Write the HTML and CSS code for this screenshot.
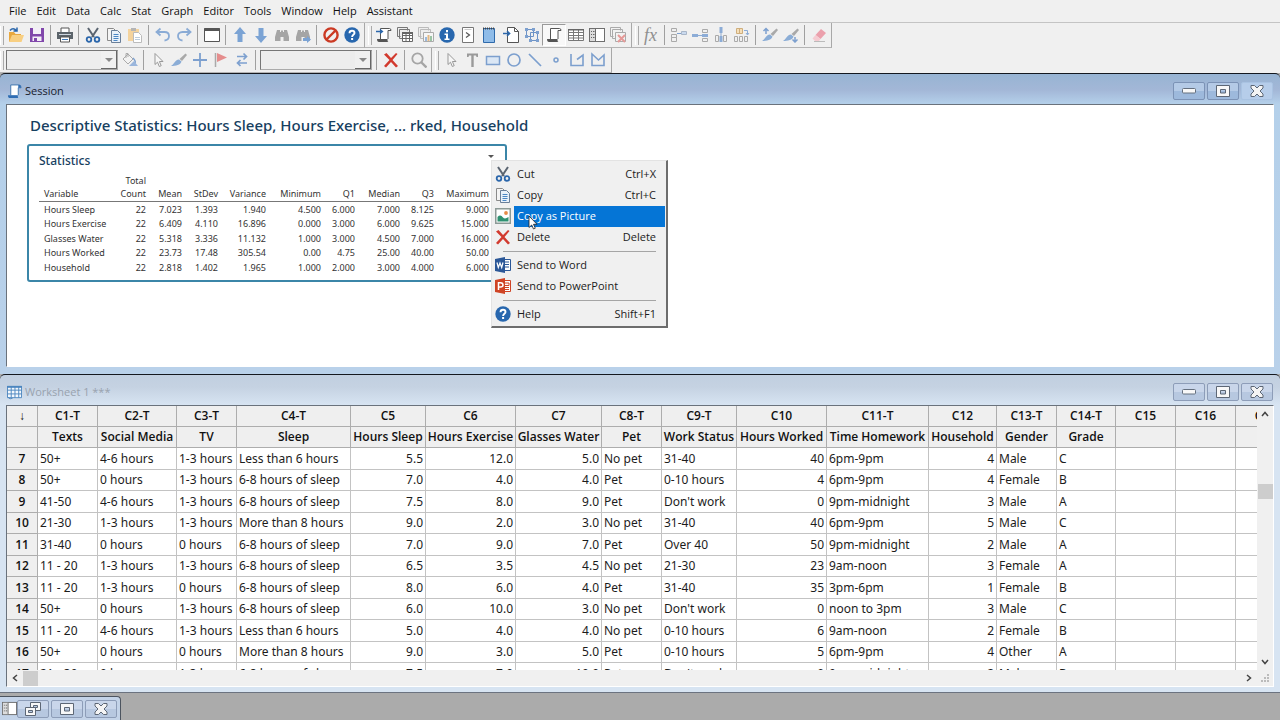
FILE: index.html
```
<!DOCTYPE html>
<html lang="en">
<head>
    <meta charset="UTF-8">
    <meta name="viewport" content="width=device-width, initial-scale=1.0">
    <title>Minitab - Session</title>
    <link rel="stylesheet" href="styles.css">
</head>
<body>
    <!-- Icons used more than once -->
    <svg class="sprite" aria-hidden="true">
        <symbol id="i-cut" viewBox="0 0 16 16">
            <path d="M3 1l6 9M13 1L7 10" stroke="#5a6470" stroke-width="2" fill="none"/>
            <circle cx="4" cy="12.5" r="2.3" fill="none" stroke="#2a66ab" stroke-width="1.8"/>
            <circle cx="12" cy="12.5" r="2.3" fill="none" stroke="#2a66ab" stroke-width="1.8"/>
        </symbol>
        <symbol id="i-copy" viewBox="0 0 16 16">
            <path d="M5 13.5H1.5v-12h6l2 2" fill="#f4f4f4" stroke="#8a8a8a"/>
            <path d="M5.500 3.500h6l3 3v9h-9z" fill="#e9f1fa" stroke="#6a7f99"/>
            <path d="M7.500 7.500h5M7.500 9.500h5M7.500 11.500h5M7.500 13.500h4" stroke="#4a86c4"/>
        </symbol>
        <symbol id="i-x" viewBox="0 0 16 16">
            <path d="M1 2.500L3.500 1 8 6l5-5 1.500 1L9.500 8l5.500 6-2 1.500-5-5.500-5 5.500L1 14l5.500-6z" fill="#d23a2e"/>
        </symbol>
        <symbol id="i-help" viewBox="0 0 16 16">
            <circle cx="8" cy="8" r="7.700" fill="#2867ae"/>
            <path d="M5.500 6.200C5.500 4.500 6.500 3.700 8 3.700s2.500.9 2.500 2.200c0 1.800-2.400 1.900-2.400 4" fill="none" stroke="#fff" stroke-width="1.900"/>
            <rect x="7.100" y="11" width="2" height="2" fill="#fff"/>
        </symbol>
        <symbol id="i-arrow" viewBox="0 0 16 16">
            <path d="M5 1.500v11l2.500-2.300L9.300 14.500l1.900-.8-1.800-4.200H13z" fill="#f6f6f6" stroke="#999"/>
        </symbol>
        <symbol id="i-binoculars" viewBox="0 0 16 16">
            <path d="M3 3h3v2h1V3.500h2V5h1V3h3l2 7v4H9.500v-4h-3v4H1v-4z" fill="#a5a5a5"/>
        </symbol>
        <symbol id="i-brush" viewBox="0 0 16 16">
            <path d="M14.500 1.500L16 3l-5 6-2.500-2z" fill="#a9a9a9"/>
            <path d="M8 7.500l2.500 2C9.500 13 5 14 0 14c3-1.500 3.500-6 8-6.500z" fill="#8badd6"/>
        </symbol>
        <symbol id="i-scroll" viewBox="0 0 16 16">
            <path d="M4.500 12V1.500h9q1.500 0 1.500 2h-3V12" fill="#fff" stroke="#555"/>
            <path d="M1 12h10.500v1q0 2 1 2H3q-2 0-2-3z" fill="#555"/>
        </symbol>
        <symbol id="i-panel" viewBox="0 0 16 14">
            <rect x=".5" y=".5" width="15" height="13" fill="#fff" stroke="#6e6e6e"/>
            <rect x="1" y="1" width="5.500" height="12" fill="#ddd"/>
            <path d="M6.500 1v12" stroke="#6e6e6e"/>
            <path d="M2 3.500h1M4 3.500h1.500M2 6.500h1M4 6.500h1.500M2 9.500h1M4 9.500h1.500" stroke="#666"/>
        </symbol>
        <symbol id="i-min" viewBox="0 0 14 6">
            <rect x=".5" y=".5" width="13" height="4.500" rx="1" fill="#f8f8f8" stroke="#65707f"/>
        </symbol>
        <symbol id="i-max" viewBox="0 0 14 12">
            <path d="M.5.500h13v11H.5zM4.500 4.500v3.500h5V4.500z" fill="#f8f8f8" fill-rule="evenodd" stroke="#5d6775"/>
        </symbol>
        <symbol id="i-close" viewBox="0 0 14 12">
            <path d="M1 .5h3.500L7 3 9.500.5H13v2.500L10 6l3 3v2.500H9.500L7 9l-2.500 2.500H1V9l3-3-3-3z" fill="#f4f4f4" stroke="#5d6775"/>
        </symbol>
        <symbol id="i-restore" viewBox="0 0 16 14">
            <path d="M5.500.5h10v8h-10z" fill="#f8f8f8" stroke="#5d6775"/>
            <path d="M8.500 3.500h4v2h-4z" fill="#b9cbe4" stroke="#5d6775"/>
            <path d="M.5 5.500h10v8H.5z" fill="#f8f8f8" stroke="#5d6775"/>
            <path d="M3.500 8.500h4v2h-4z" fill="#b9cbe4" stroke="#5d6775"/>
        </symbol>
    </svg>

    <nav class="menubar">
        <a href="#">File</a>
        <a href="#">Edit</a>
        <a href="#">Data</a>
        <a href="#">Calc</a>
        <a href="#">Stat</a>
        <a href="#">Graph</a>
        <a href="#">Editor</a>
        <a href="#">Tools</a>
        <a href="#">Window</a>
        <a href="#">Help</a>
        <a href="#">Assistant</a>
    </nav>

    <div class="toolbars">
        <div class="toolbar-row">
            <div class="toolbar">
                <button aria-label="Open"><svg viewBox="0 0 16 16"><path d="M1 15V5h5l1.500 2H13v2" fill="#e8a83f"/><path d="M1 15l3-7h12l-2.500 7z" fill="#f8cf82"/><path d="M2 3.500Q5 0 8.500 3.500M9 .5v3.500H5.500" fill="none" stroke="#2a66ab" stroke-width="1.500"/></svg></button>
                <button aria-label="Save"><svg viewBox="0 0 16 16"><path d="M1 1h14v14H1z" fill="#8046ab"/><path d="M4 1h8v6H4zM3.500 9.500h9V14h-9z" fill="#f3eef7"/><path d="M5 11h3v3H5z" fill="#8046ab"/></svg></button>
                <span class="sep"></span>
                <button aria-label="Print"><svg viewBox="0 0 16 16"><path d="M4 5V1h8v4" fill="#fff" stroke="#555"/><path d="M0 5h16v7H0z" fill="#5c646b"/><path d="M2 7.500h12" stroke="#cfd6dd"/><path d="M3.500 10h9v5h-9z" fill="#fff" stroke="#555"/><path d="M5 12.500h6" stroke="#3c78ba"/></svg></button>
                <span class="sep"></span>
                <button aria-label="Cut"><svg><use href="#i-cut"/></svg></button>
                <button aria-label="Copy"><svg><use href="#i-copy"/></svg></button>
                <button aria-label="Paste" disabled><svg viewBox="0 0 16 16"><path d="M1 2h11v12H1z" fill="#f4d39d"/><path d="M4 1h5v3H4z" fill="#b5b5b5"/><path d="M6.500 5.500h5l3 3v7h-8z" fill="#fff" stroke="#bbb"/><path d="M8 10.500h5M8 12.500h5" stroke="#bcd"/></svg></button>
                <span class="sep"></span>
                <button aria-label="Undo" disabled><svg viewBox="0 0 16 16"><path d="M5.500 1.500L1.500 5l4 3.500M2 5h7.500c6 0 6 8 0 8.500" fill="none" stroke="#8aabd5" stroke-width="1.800"/></svg></button>
                <button aria-label="Redo" disabled><svg viewBox="0 0 16 16"><path d="M10.500 1.500L14.500 5l-4 3.500M14 5H6.500c-6 0-6 8 0 8.500" fill="none" stroke="#8aabd5" stroke-width="1.800"/></svg></button>
                <span class="sep"></span>
                <button aria-label="Last dialog"><svg viewBox="0 0 16 16"><path d="M.5 1.500h15v13H.5z" fill="#fff" stroke="#555"/><path d="M.5 1h15v3H.5z" fill="#555"/></svg></button>
                <span class="sep"></span>
                <button aria-label="Previous command" disabled><svg viewBox="0 0 16 16"><path d="M8 0l6 7h-3.500v8h-5V7H2z" fill="#7ba3d4"/></svg></button>
                <button aria-label="Next command" disabled><svg viewBox="0 0 16 16"><path d="M8 16l6-7h-3.500V1h-5v8H2z" fill="#7ba3d4"/></svg></button>
                <button aria-label="Find" disabled><svg><use href="#i-binoculars"/></svg></button>
                <button aria-label="Find next" disabled><svg viewBox="0 0 16 16"><use href="#i-binoculars"/><path d="M8 11h4V9l4 3.500-4 3.500v-2H8z" fill="#7ba3d4"/></svg></button>
                <span class="sep"></span>
                <button aria-label="Cancel"><svg viewBox="0 0 16 16"><circle cx="8" cy="8" r="6.600" fill="none" stroke="#cb3a24" stroke-width="2.400"/><path d="M12.500 3.500l-9 9" stroke="#cb3a24" stroke-width="2.400"/></svg></button>
                <button aria-label="Help"><svg><use href="#i-help"/></svg></button>
            </div>

            <div class="toolbar manager">
                <button aria-label="Show session folder"><svg viewBox="0 0 16 16"><use href="#i-scroll"/><path d="M0 4.500h6M4 2.500l2.500 2L4 6.500" fill="none" stroke="#2a66ab" stroke-width="1.300"/></svg></button>
                <button aria-label="Show worksheets folder"><svg viewBox="0 0 16 16"><path d="M3.500 9.500h-3v-9h10v3M5.500 11.500h-3v-9h10v3" fill="#eee" stroke="#777"/><path d="M5.500 5.500h10v9h-10zM5.500 8.500h10M5.500 11.500h10M9 5.500v9M12.500 5.500v9" fill="#fff" stroke="#666"/><path d="M5 5h11v2H5z" fill="#666"/></svg></button>
                <button aria-label="Show graphs folder" disabled><svg viewBox="0 0 16 16"><path d="M3.500 9.500h-3v-9h10v3M5.500 11.500h-3v-9h10v3" fill="#eee" stroke="#bbb"/><path d="M5.500 5.500h10v9h-10z" fill="#f6f6f6" stroke="#aaa"/><path d="M7 10h2v4H7z" fill="#9bb9de"/><path d="M9.500 8h2v6h-2z" fill="#e3b984"/><path d="M12 9h2v5h-2z" fill="#9bc4a5"/></svg></button>
                <button aria-label="Show info"><svg viewBox="0 0 16 16"><circle cx="8" cy="8" r="7.700" fill="#2867ae"/><path d="M7 3h2v2.200H7zM5.500 6.500H9v5h1.500V13h-5v-1.500H7V8H5.500z" fill="#fff"/></svg></button>
                <button aria-label="Show history"><svg viewBox="0 0 16 16"><path d="M2.500.5h11v15h-11z" fill="#fff" stroke="#777"/><path d="M4.500 2.500h7" stroke="#ccc"/><path d="M6 5.500L9.500 8 6 10.500" fill="none" stroke="#555" stroke-width="1.200"/></svg></button>
                <button aria-label="Show report pad"><svg viewBox="0 0 16 16"><path d="M2.500 1.500h11v14h-11z" fill="#8fbce9" stroke="#2f6aab"/><path d="M2 1.500h12" stroke="#444" stroke-width="2" stroke-dasharray="1 1"/></svg></button>
                <button aria-label="Show related documents"><svg viewBox="0 0 16 16"><path d="M4.500.5h7l4 4v11h-11z" fill="#fff" stroke="#555"/><path d="M11.500.5v4h4" fill="none" stroke="#555"/><path d="M0 6.500h6M4 4l2.700 2.500L4 9" fill="none" stroke="#2a66ab" stroke-width="1.400"/></svg></button>
                <button aria-label="Show design"><svg viewBox="0 0 16 16"><path d="M2.500 2.500h7v7h-7zM6.500 5.500h7v8h-7z" fill="none" stroke="#6d93c6"/><path d="M1 1h3v3H1zM8 1h3v3H8zM1 8h3v3H1zM12 4h3v3h-3zM5 12h3v3H5zM12 12h3v3h-3z" fill="#7da0cf"/></svg></button>
                <button class="pressed" aria-label="Current session"><svg><use href="#i-scroll"/></svg></button>
                <button aria-label="Current worksheet"><svg viewBox="0 0 16 16"><path d="M.5 2.500h15v11H.5zM.5 5.500h15M.5 8.500h15M.5 11h15M5.500 2.500v11M10.500 2.500v11" fill="#fff" stroke="#777"/><path d="M0 2h16v1.500H0z" fill="#666"/></svg></button>
                <button aria-label="Project manager"><svg><use href="#i-panel"/></svg></button>
                <button aria-label="Close all graphs" disabled><svg viewBox="0 0 16 16"><path d="M3.500 9.500h-3v-9h10v3M5.500 11.500h-3v-9h10v3M5.500 5.500h10v9h-10z" fill="#f2f2f2" stroke="#aaa"/><path d="M8 8l7 7M15 8l-7 7" stroke="#e59a98" stroke-width="2"/></svg></button>
            </div>

            <div class="toolbar">
                <button class="fx" aria-label="Assign formula" disabled><i>fx</i></button>
                <span class="sep"></span>
                <button aria-label="Insert cells" disabled><svg viewBox="0 0 16 16"><path d="M.5 1.500h5v3h-5zM.5 7.500h5v3h-5zM.5 10.500h5v4h-5z" fill="none" stroke="#aaa"/><path d="M6 6.500h4" stroke="#7da0cf"/><path d="M10.500 4.500h5v3h-5z" fill="#c9d9ee" stroke="#a9b6c8"/></svg></button>
                <button aria-label="Insert rows" disabled><svg viewBox="0 0 16 16"><path d="M0 7h6v3H0z" fill="#8cacd6"/><path d="M6 8.500h4" stroke="#8cacd6"/><path d="M10.500 2.500h5v3h-5zM10.500 11.500h5v3h-5z" fill="none" stroke="#aaa"/><path d="M10 7h6v3h-6z" fill="#8cacd6"/></svg></button>
                <button aria-label="Insert columns" disabled><svg viewBox="0 0 16 16"><path d="M6.500 0h3v6h-3z" fill="#8cacd6"/><path d="M8 6v4" stroke="#8cacd6"/><path d="M2.500 8.500h3v6h-3zM10.500 8.500h3v6h-3z" fill="none" stroke="#aaa"/><path d="M6.500 9h3v6h-3z" fill="#8cacd6"/></svg></button>
                <button aria-label="Move columns" disabled><svg viewBox="0 0 16 16"><path d="M2.500 1.500h6v5h-6zM5.500 1.500v5" fill="#f5dfb9" stroke="#cfae7c"/><path d="M10 3.500h3.500v4M12 6l1.500 2L15 6" fill="none" stroke="#8cacd6"/><path d="M.5 9.500h3v5h-3zM5.500 9.500h3v5h-3zM10.500 9.500h3v5h-3z" fill="none" stroke="#aaa"/></svg></button>
                <span class="sep"></span>
                <button aria-label="Previous brushed row" disabled><svg viewBox="0 0 16 16"><use href="#i-brush"/><path d="M4 7V2M1.500 4L4 1.500 6.500 4" fill="none" stroke="#7da0cf" stroke-width="1.500"/></svg></button>
                <button aria-label="Next brushed row" disabled><svg viewBox="0 0 16 16"><use href="#i-brush"/><path d="M12 10v5M9.500 12.500L12 15l2.500-2.500" fill="none" stroke="#7da0cf" stroke-width="1.500"/></svg></button>
                <span class="sep"></span>
                <button aria-label="Clear" disabled><svg viewBox="0 0 16 16"><path d="M10 2l5 4-5.500 6-5-4z" fill="#eba0ac"/><path d="M4.500 8l5 4-1.500 2H4L1.500 11.500z" fill="#f5cbd1"/><path d="M3 14.500h11" stroke="#bbb"/></svg></button>
            </div>
        </div>

        <div class="toolbar-row">
            <div class="toolbar">
                <div class="combo">
                    <select aria-label="Graph item" disabled><option></option></select>
                    <span class="combo-arrow"></span>
                </div>
                <button aria-label="Edit attributes" disabled><svg viewBox="0 0 16 16"><path d="M6 2l5 5-5 5-5-5z" fill="#f2f2f2" stroke="#aaa"/><path d="M4 6V1.500h2V5" fill="none" stroke="#aaa"/><path d="M11 6q3 3 2 5" fill="none" stroke="#7da0cf" stroke-width="1.500"/><path d="M7 14l5-5 4 5z" fill="#9ab6dc"/></svg></button>
                <span class="sep"></span>
                <button aria-label="Select" disabled><svg><use href="#i-arrow"/></svg></button>
                <button aria-label="Brush" disabled><svg><use href="#i-brush"/></svg></button>
                <button aria-label="Crosshairs" disabled><svg viewBox="0 0 16 16"><path d="M8 1v14M1 8h14" stroke="#7da0cf" stroke-width="1.800"/></svg></button>
                <button aria-label="Plant flag" disabled><svg viewBox="0 0 16 16"><path d="M2.500 1v14" stroke="#aaa" stroke-width="1.500"/><path d="M4 1l10 4.500L4 10z" fill="#e58d8d"/></svg></button>
                <button aria-label="Swap" disabled><svg viewBox="0 0 16 16"><path d="M3 4.500h9M9.500 1.500l3 3-3 3M13 11H4M6.500 8l-3 3 3 3" fill="none" stroke="#7da0cf" stroke-width="1.700"/></svg></button>
                <span class="sep"></span>
                <div class="combo">
                    <select aria-label="Zoom" disabled><option></option></select>
                    <span class="combo-arrow"></span>
                </div>
                <span class="sep"></span>
                <button aria-label="Delete"><svg><use href="#i-x"/></svg></button>
                <span class="sep"></span>
                <button aria-label="Magnify" disabled><svg viewBox="0 0 16 16"><circle cx="6.500" cy="6.500" r="5.200" fill="none" stroke="#a5a5a5" stroke-width="1.800"/><path d="M10 10l5.500 5.500" stroke="#a5a5a5" stroke-width="2.400"/></svg></button>
            </div>

            <div class="toolbar annotate">
                <button aria-label="Select item" disabled><svg><use href="#i-arrow"/></svg></button>
                <button aria-label="Text" disabled><svg viewBox="0 0 16 16"><path d="M3 1.500h11V5h-1.500l-.5-1.500H9.700V15H7.300V3.500H5L4.500 5H3z" fill="#9a9a9a"/></svg></button>
                <button aria-label="Rectangle" disabled><svg viewBox="0 0 16 16"><path d="M1.500 4.500h13v8h-13z" fill="#dbe7f5" stroke="#7c9fce" stroke-width="1.500"/></svg></button>
                <button aria-label="Ellipse" disabled><svg viewBox="0 0 16 16"><circle cx="8" cy="8" r="6" fill="none" stroke="#7c9fce" stroke-width="1.700"/></svg></button>
                <button aria-label="Line" disabled><svg viewBox="0 0 16 16"><path d="M2 2l12 12" stroke="#7c9fce" stroke-width="1.700"/></svg></button>
                <button aria-label="Marker" disabled><svg viewBox="0 0 16 16"><circle cx="8" cy="8" r="2" fill="none" stroke="#7c9fce" stroke-width="1.500"/></svg></button>
                <button aria-label="Polyline" disabled><svg viewBox="0 0 16 16"><path d="M2 2v11.500h12V3L8 7.500" fill="none" stroke="#7c9fce" stroke-width="1.600"/></svg></button>
                <button aria-label="Polygon" disabled><svg viewBox="0 0 16 16"><path d="M2 2v11.500h12V3L8.500 8z" fill="none" stroke="#7c9fce" stroke-width="1.600"/></svg></button>
            </div>
        </div>
    </div>

    <section class="window active">
        <header class="titlebar">
            <svg class="title-icon" viewBox="0 0 16 16"><path d="M4 12V1h9q2 0 2 3h-3v8" fill="#fff" stroke="#3e74ae"/><path d="M1 12h10.500v1q0 2 1 2H3q-2 0-2-3z" fill="#2f6db3"/><path d="M12 1h2q1 1 1 3h-3z" fill="#2f6db3"/></svg>
            <h1>Session</h1>
            <div class="window-buttons">
                <button aria-label="Minimize"><svg class="min"><use href="#i-min"/></svg></button>
                <button aria-label="Maximize"><svg><use href="#i-max"/></svg></button>
                <button aria-label="Close"><svg><use href="#i-close"/></svg></button>
            </div>
        </header>
        <div class="pane session">
            <h2>Descriptive Statistics: Hours Sleep, Hours Exercise, ... rked, Household</h2>

            <div class="card">
                <div class="card-head">
                    <h3>Statistics</h3>
                    <button class="card-menu" aria-label="Output options"></button>
                </div>
                <table class="stats">
                    <colgroup>
                        <col class="w-name"><col class="w-count"><col class="w-mean"><col class="w-mean"><col class="w-var"><col class="w-range"><col class="w-q"><col class="w-med"><col class="w-q"><col class="w-range">
                    </colgroup>
                    <thead>
                        <tr><th>Variable</th><th>Total<br>Count</th><th>Mean</th><th>StDev</th><th>Variance</th><th>Minimum</th><th>Q1</th><th>Median</th><th>Q3</th><th>Maximum</th></tr>
                    </thead>
                    <tbody>
                        <tr><td>Hours Sleep</td><td>22</td><td>7.023</td><td>1.393</td><td>1.940</td><td>4.500</td><td>6.000</td><td>7.000</td><td>8.125</td><td>9.000</td></tr>
                        <tr><td>Hours Exercise</td><td>22</td><td>6.409</td><td>4.110</td><td>16.896</td><td>0.000</td><td>3.000</td><td>6.000</td><td>9.625</td><td>15.000</td></tr>
                        <tr><td>Glasses Water</td><td>22</td><td>5.318</td><td>3.336</td><td>11.132</td><td>1.000</td><td>3.000</td><td>4.500</td><td>7.000</td><td>16.000</td></tr>
                        <tr><td>Hours Worked</td><td>22</td><td>23.73</td><td>17.48</td><td>305.54</td><td>0.00</td><td>4.75</td><td>25.00</td><td>40.00</td><td>50.00</td></tr>
                        <tr><td>Household</td><td>22</td><td>2.818</td><td>1.402</td><td>1.965</td><td>1.000</td><td>2.000</td><td>3.000</td><td>4.000</td><td>6.000</td></tr>
                    </tbody>
                </table>

                <div class="context-menu">
                    <button><svg><use href="#i-cut"/></svg><span>Cut</span><kbd>Ctrl+X</kbd></button>
                    <button><svg><use href="#i-copy"/></svg><span>Copy</span><kbd>Ctrl+C</kbd></button>
                    <button class="selected">
                        <svg viewBox="0 0 16 16"><path d="M0 0h16v16H0z" fill="#8c9a96"/><path d="M1.500 1.500h13v13h-13z" fill="#fff"/><path d="M2.500 9q3-3 5.500.5 2 2 5.500-.5v4.500h-11z" fill="#2e9171"/><circle cx="11" cy="5" r="1.900" fill="#e58b47"/></svg>
                        <span>Copy as Picture</span>
                    </button>
                    <button><svg><use href="#i-x"/></svg><span>Delete</span><kbd>Delete</kbd></button>
                    <hr>
                    <button>
                        <svg viewBox="0 0 16 16"><path d="M8 2.500h7.500v11H8z" fill="#fff" stroke="#2b5797"/><path d="M9 5h5M9 7.500h5M9 10h5" stroke="#2b5797"/><path d="M0 2l10-2v16L0 14z" fill="#2b5797"/><path d="M2 5.500l1.300 5L5 6l1.700 4.500L8 5.500" fill="none" stroke="#fff" stroke-width="1.200"/></svg>
                        <span>Send to Word</span>
                    </button>
                    <button>
                        <svg viewBox="0 0 16 16"><path d="M8 2.500h7.500v11H8z" fill="#fff" stroke="#cf4425"/><path d="M10 5h4v2.500h-4M10 9.500h4M10 11.500h4" fill="none" stroke="#cf4425"/><path d="M0 2l10-2v16L0 14z" fill="#cf4425"/><path d="M3.500 12V4.700h2q2.500.2 2.500 2.200T5.500 9h-2" fill="none" stroke="#fff" stroke-width="1.500"/></svg>
                        <span>Send to PowerPoint</span>
                    </button>
                    <hr>
                    <button><svg><use href="#i-help"/></svg><span>Help</span><kbd>Shift+F1</kbd></button>
                    <svg class="pointer" viewBox="0 0 10 15"><path d="M1 1v11.500l2.700-2.500 1.800 4 1.800-.8-1.800-3.900h3.500z" fill="#fff" stroke="#222" stroke-width=".8"/></svg>
                </div>
            </div>
        </div>
    </section>

    <section class="window">
        <header class="titlebar">
            <svg class="title-icon" viewBox="0 0 16 16"><path d="M.5 1.500h15v12H.5zM.5 5.500h15M.5 9.500h15M4.500 1.500v12M8.500 1.500v12M12.500 1.500v12" fill="#f3f8fd" stroke="#4c86bf"/><path d="M0 1h16v2H0z" fill="#4c86bf"/><path d="M1 13q2 3 5 1" fill="none" stroke="#4c86bf"/></svg>
            <h1>Worksheet 1 ***</h1>
            <div class="window-buttons">
                <button aria-label="Minimize"><svg class="min"><use href="#i-min"/></svg></button>
                <button aria-label="Maximize"><svg><use href="#i-max"/></svg></button>
                <button aria-label="Close"><svg><use href="#i-close"/></svg></button>
            </div>
        </header>
        <div class="pane worksheet">
            <div class="sheet">
                <table>
                    <colgroup>
                        <col class="c0"><col class="c60"><col class="c79"><col class="c60"><col class="c114"><col class="c75"><col class="c90"><col class="c86"><col class="c60"><col class="c75"><col class="c90"><col class="c102"><col class="c68"><col class="c60"><col class="c59"><col class="c60"><col class="c60"><col class="c60">
                    </colgroup>
                    <thead>
                        <tr><th>↓</th><th>C1-T</th><th>C2-T</th><th>C3-T</th><th>C4-T</th><th>C5</th><th>C6</th><th>C7</th><th>C8-T</th><th>C9-T</th><th>C10</th><th>C11-T</th><th>C12</th><th>C13-T</th><th>C14-T</th><th>C15</th><th>C16</th><th>C17</th></tr>
                        <tr><th></th><th>Texts</th><th>Social Media</th><th>TV</th><th>Sleep</th><th>Hours Sleep</th><th>Hours Exercise</th><th>Glasses Water</th><th>Pet</th><th>Work Status</th><th>Hours Worked</th><th>Time Homework</th><th>Household</th><th>Gender</th><th>Grade</th><th></th><th></th><th></th></tr>
                    </thead>
                    <tbody>
                        <tr><th>7</th><td>50+</td><td>4-6 hours</td><td>1-3 hours</td><td>Less than 6 hours</td><td>5.5</td><td>12.0</td><td>5.0</td><td>No pet</td><td>31-40</td><td>40</td><td>6pm-9pm</td><td>4</td><td>Male</td><td>C</td><td></td><td></td><td></td></tr>
                        <tr><th>8</th><td>50+</td><td>0 hours</td><td>1-3 hours</td><td>6-8 hours of sleep</td><td>7.0</td><td>4.0</td><td>4.0</td><td>Pet</td><td>0-10 hours</td><td>4</td><td>6pm-9pm</td><td>4</td><td>Female</td><td>B</td><td></td><td></td><td></td></tr>
                        <tr><th>9</th><td>41-50</td><td>4-6 hours</td><td>1-3 hours</td><td>6-8 hours of sleep</td><td>7.5</td><td>8.0</td><td>9.0</td><td>Pet</td><td>Don't work</td><td>0</td><td>9pm-midnight</td><td>3</td><td>Male</td><td>A</td><td></td><td></td><td></td></tr>
                        <tr><th>10</th><td>21-30</td><td>1-3 hours</td><td>1-3 hours</td><td>More than 8 hours</td><td>9.0</td><td>2.0</td><td>3.0</td><td>No pet</td><td>31-40</td><td>40</td><td>6pm-9pm</td><td>5</td><td>Male</td><td>C</td><td></td><td></td><td></td></tr>
                        <tr><th>11</th><td>31-40</td><td>0 hours</td><td>0 hours</td><td>6-8 hours of sleep</td><td>7.0</td><td>9.0</td><td>7.0</td><td>Pet</td><td>Over 40</td><td>50</td><td>9pm-midnight</td><td>2</td><td>Male</td><td>A</td><td></td><td></td><td></td></tr>
                        <tr><th>12</th><td>11 - 20</td><td>1-3 hours</td><td>1-3 hours</td><td>6-8 hours of sleep</td><td>6.5</td><td>3.5</td><td>4.5</td><td>No pet</td><td>21-30</td><td>23</td><td>9am-noon</td><td>3</td><td>Female</td><td>A</td><td></td><td></td><td></td></tr>
                        <tr><th>13</th><td>11 - 20</td><td>1-3 hours</td><td>0 hours</td><td>6-8 hours of sleep</td><td>8.0</td><td>6.0</td><td>4.0</td><td>Pet</td><td>31-40</td><td>35</td><td>3pm-6pm</td><td>1</td><td>Female</td><td>B</td><td></td><td></td><td></td></tr>
                        <tr><th>14</th><td>50+</td><td>0 hours</td><td>1-3 hours</td><td>6-8 hours of sleep</td><td>6.0</td><td>10.0</td><td>3.0</td><td>No pet</td><td>Don't work</td><td>0</td><td>noon to 3pm</td><td>3</td><td>Male</td><td>C</td><td></td><td></td><td></td></tr>
                        <tr><th>15</th><td>11 - 20</td><td>4-6 hours</td><td>1-3 hours</td><td>Less than 6 hours</td><td>5.0</td><td>4.0</td><td>4.0</td><td>No pet</td><td>0-10 hours</td><td>6</td><td>9am-noon</td><td>2</td><td>Female</td><td>B</td><td></td><td></td><td></td></tr>
                        <tr><th>16</th><td>50+</td><td>0 hours</td><td>0 hours</td><td>More than 8 hours</td><td>9.0</td><td>3.0</td><td>5.0</td><td>Pet</td><td>0-10 hours</td><td>5</td><td>6pm-9pm</td><td>4</td><td>Other</td><td>A</td><td></td><td></td><td></td></tr>
                        <tr><th>17</th><td>21 - 30</td><td>0 hours</td><td>1-3 hours</td><td>6-8 hours of sleep</td><td>7.5</td><td>7.0</td><td>10.0</td><td>Pet</td><td>Don't work</td><td>0</td><td>9pm-midnight</td><td>2</td><td>Male</td><td>B</td><td></td><td></td><td></td></tr>
                    </tbody>
                </table>
            </div>
            <div class="scroll-v">
                <svg viewBox="0 0 8 6"><path d="M1 5l3-3.500L7 5" fill="none" stroke="#444" stroke-width="1.500"/></svg>
                <span class="thumb"></span>
                <svg viewBox="0 0 8 6"><path d="M1 1l3 3.500L7 1" fill="none" stroke="#444" stroke-width="1.500"/></svg>
            </div>
            <div class="scroll-h">
                <svg viewBox="0 0 6 8"><path d="M5 1L1.500 4 5 7" fill="none" stroke="#444" stroke-width="1.500"/></svg>
                <span class="thumb"></span>
                <svg viewBox="0 0 6 8"><path d="M1 1l3.500 3L1 7" fill="none" stroke="#444" stroke-width="1.500"/></svg>
            </div>
            <svg class="size-grip" viewBox="0 0 10 10"><path d="M7 1h2v2H7zM4 4h2v2H4zM7 4h2v2H7zM1 7h2v2H1zM4 7h2v2H4zM7 7h2v2H7z" fill="#bbb"/></svg>
        </div>
    </section>

    <footer class="desktop">
        <div class="minimized">
            <svg class="title-icon"><use href="#i-panel"/></svg>
            <div class="window-buttons">
                <button aria-label="Restore"><svg class="restore"><use href="#i-restore"/></svg></button>
                <button aria-label="Maximize"><svg><use href="#i-max"/></svg></button>
                <button aria-label="Close"><svg><use href="#i-close"/></svg></button>
            </div>
        </div>
    </footer>
</body>
</html>
```
FILE: styles.css
```
* {
    box-sizing: border-box;
}

body {
    margin: 0;
    height: 100vh;
    min-height: 600px;
    overflow: hidden;
    display: grid;
    grid-template-columns: minmax(0, 1fr);
    grid-template-rows: auto auto minmax(0, 301fr) minmax(0, 319fr) auto;
    font-family: "Open Sans", "Noto Sans", sans-serif;
    font-size: 11px;
    line-height: 16px;
    color: #1c1c1c;
    background-color: #ababab;
}

button {
    font: inherit;
    color: inherit;
    margin: 0;
    padding: 0;
    border: none;
    background: none;
}

h1, h2, h3 {
    margin: 0;
    font-weight: normal;
}

.sprite {
    position: absolute;
    width: 0;
    height: 0;
}

/* Menu bar */
.menubar {
    display: flex;
    gap: 10px;
    padding: 3px 9px;
    background-color: #f0f0f0;
    border-bottom: 1px solid #c4c4c4;
}

.menubar a {
    color: #111;
    text-decoration: none;
}

/* Toolbars */
.toolbars {
    background-color: #f0f0f0;
}

.toolbar-row {
    display: flex;
    height: 25px;
}

.toolbar {
    display: flex;
    align-items: center;
    padding: 0 2px 0 3px;
    border-right: 1px solid #a8a8a8;
    border-bottom: 1px solid #b4b4b4;
}

.toolbar::before {
    content: "";
    width: 2px;
    height: 19px;
    margin-right: 1px;
    border-left: 1px solid #fff;
    border-right: 1px solid #aaa;
}

.toolbar:first-child {
    padding-left: 0;
}

.toolbar button {
    width: 21px;
    height: 22px;
    display: flex;
    align-items: center;
    justify-content: center;
}

.toolbar svg {
    width: 16px;
    height: 16px;
}

.manager {
    width: 267px;
}

.annotate {
    width: 180px;
}

.manager button,
.annotate button {
    flex: 1;
}

.toolbar .pressed {
    background-color: #f8f8f8;
    border: 1px solid #999;
    border-right-color: #fff;
    border-bottom-color: #fff;
}

.fx i {
    font-family: "Liberation Serif", serif;
    font-size: 18px;
    color: #8f8f8f;
}

.sep {
    width: 1px;
    height: 20px;
    margin: 0 3px;
    background-color: #a0a0a0;
}

.combo {
    display: grid;
    width: 112px;
    height: 20px;
    margin: 0 1px;
}

.combo select {
    grid-area: 1 / 1;
    appearance: none;
    width: 100%;
    border: 1px solid #767676;
    border-right-color: #aaa;
    border-bottom-color: #aaa;
    background-color: #ededed;
    opacity: 1;
}

.combo-arrow {
    grid-area: 1 / 1;
    justify-self: end;
    width: 16px;
    margin: 1px;
    display: grid;
    place-items: center;
    background-color: #f0f0f0;
    border-right: 1px solid #666;
    border-bottom: 1px solid #666;
    pointer-events: none;
}

.combo-arrow::before {
    content: "";
    border: 4px solid transparent;
    border-top-color: #888;
    border-bottom: none;
}

/* MDI windows */
.window {
    display: flex;
    flex-direction: column;
    min-width: 0;
    border-top: 1px solid #14181f;
    border-bottom: 1px solid #6b7380;
    border-radius: 5px 5px 0 0;
    padding: 0 6px 5px;
    background: linear-gradient(#c1cfe0, #c5d2e2 12px, #d7e4f2 30px);
}

.window.active {
    border-bottom: none;
    padding-bottom: 7px;
    background: linear-gradient(#97b4d3, #a3b7d7 16px, #b4d0ea 30px, #b9d1ea);
}

.titlebar {
    flex: none;
    display: flex;
    align-items: center;
    height: 30px;
    padding: 4px 1px 0 1px;
}

.title-icon {
    width: 15px;
    height: 15px;
    margin-right: 3px;
}

.titlebar h1 {
    flex: 1;
    font-size: 11px;
    line-height: 16px;
    color: #98a2ae;
}

.active .titlebar h1 {
    color: #16202c;
}

.window-buttons {
    display: flex;
    gap: 2px;
}

.window-buttons button {
    width: 32px;
    height: 18px;
    display: grid;
    place-items: center;
    border: 1px solid #8d9db8;
    border-radius: 2px;
    background: linear-gradient(#c9d6ea 50%, #b7c8e0 50%);
}

.active .window-buttons button {
    border-color: #7c93b6;
    background: linear-gradient(#b4cae6 50%, #9db9dc 50%);
}

.active .window-buttons button:last-child {
    border-color: #a9c3e2;
    background: #b6cdea;
}

.window-buttons svg {
    width: 14px;
    height: 12px;
}

.window-buttons .min {
    height: 6px;
}

.window-buttons .restore {
    width: 16px;
    height: 14px;
}

.pane {
    flex: 1;
    min-height: 0;
    border: 1px solid #6a727c;
    border-right-color: #fff;
    border-bottom-color: #fff;
    background-color: #fff;
}

/* Session output */
.session {
    padding: 10px 20px;
}

.session h2,
.card h3 {
    font-family: "Noto Sans", "Open Sans", sans-serif;
    font-weight: 500;
    line-height: 20px;
    color: #17405f;
}

.session h2 {
    padding-left: 3px;
    font-size: 15px;
}

.card {
    position: relative;
    width: 480px;
    margin-top: 9px;
    padding: 5px 10px;
    border: 2px solid #3b86a8;
    border-radius: 3px;
}

.card-head {
    display: flex;
    justify-content: space-between;
}

.card h3 {
    font-size: 12px;
}

.card-menu {
    align-self: flex-start;
    margin: 4px 1px;
    border: 3px solid transparent;
    border-top-color: #555;
    border-bottom: none;
}

.stats {
    table-layout: fixed;
    width: 451px;
    margin-top: 3px;
    border-collapse: collapse;
    font-family: "Noto Sans", "Open Sans", sans-serif;
    font-size: 9px;
    line-height: 13px;
    color: #333;
}

.w-name { width: 75px; }
.w-count { width: 33px; }
.w-mean { width: 36px; }
.w-var { width: 48px; }
.w-range { width: 55px; }
.w-q { width: 34px; }
.w-med { width: 45px; }

.stats th,
.stats td {
    padding: 0 1px 0 0;
    font-weight: normal;
    text-align: right;
    white-space: nowrap;
}

.stats th {
    vertical-align: bottom;
    padding-bottom: 1px;
    border-bottom: 1px solid #777;
}

.stats th:first-child,
.stats td:first-child {
    padding-left: 5px;
    text-align: left;
}

.stats tbody tr {
    height: 15px;
}

.stats tbody tr:nth-child(even) {
    height: 14px;
}

/* Context menu, opened from the card's arrow */
.context-menu {
    position: absolute;
    left: 462px;
    top: 14px;
    width: 177px;
    padding: 3px 1px 1px 2px;
    background-color: #f0f0f0;
    border: 1px solid #e3e3e3;
    border-right: 2px solid #6d6d6d;
    border-bottom: 2px solid #6d6d6d;
    z-index: 1;
}

.context-menu button {
    display: flex;
    align-items: stretch;
    width: 100%;
    height: 21px;
    line-height: 20px;
    text-align: left;
}

.context-menu button svg {
    flex: none;
    width: 16px;
    height: 16px;
    margin: 2px 3px 0 1px;
}

.context-menu button span {
    flex: 1;
    padding-left: 3px;
}

.context-menu kbd {
    font-family: inherit;
    font-size: 11px;
    padding-right: 9px;
}

.context-menu .selected span {
    color: #fff;
    background-color: #0575d6;
}

.context-menu hr {
    height: 1px;
    margin: 3px 9px;
    border: none;
    background-color: #a5a5a5;
}

.pointer {
    position: absolute;
    left: 36px;
    top: 54px;
    width: 10px;
    height: 15px;
}

/* Worksheet */
.worksheet {
    display: grid;
    grid-template-columns: minmax(0, 1fr) 16px;
    grid-template-rows: minmax(0, 1fr) 16px;
    background-color: #f0f0f0;
}

.sheet {
    overflow: hidden;
    background-color: #fff;
}

.sheet table {
    table-layout: fixed;
    width: 1289px;
    border-collapse: separate;
    border-spacing: 0;
    font-size: 12px;
    line-height: 18px;
}

.c0 { width: 31px; }
.c59 { width: 59px; }
.c60 { width: 60px; }
.c68 { width: 68px; }
.c75 { width: 75px; }
.c79 { width: 79px; }
.c86 { width: 86px; }
.c90 { width: 90px; }
.c102 { width: 102px; }
.c114 { width: 114px; }

.sheet th,
.sheet td {
    padding: 0 2px;
    border-right: 1px solid #c3c3c3;
    border-bottom: 1px solid #c3c3c3;
    white-space: nowrap;
    text-align: left;
}

.sheet td {
    font-family: "Noto Sans", "Open Sans", sans-serif;
}

.sheet th {
    padding: 0;
    font-weight: 600;
    text-align: center;
    color: #111;
    background-color: #efefef;
    border-color: #adadad;
}

.sheet thead tr,
.sheet tbody tr {
    height: 21px;
}

.sheet tbody tr:nth-child(odd) {
    height: 22px;
}

.sheet td:nth-child(6),
.sheet td:nth-child(7),
.sheet td:nth-child(8),
.sheet td:nth-child(11),
.sheet td:nth-child(13) {
    text-align: right;
}

.scroll-v,
.scroll-h {
    display: flex;
    align-items: center;
    justify-content: space-between;
    background-color: #f0f0f0;
}

.scroll-v {
    flex-direction: column;
    padding: 5px 0;
}

.scroll-h {
    padding: 0 5px;
}

.scroll-v svg {
    width: 8px;
    height: 6px;
}

.scroll-h svg {
    width: 6px;
    height: 8px;
}

.thumb {
    width: 15px;
    height: 15px;
    background-color: #cdcdcd;
}

.scroll-v .thumb {
    margin-bottom: 94px;
}

.scroll-h .thumb {
    margin: 0 auto 0 5px;
}

.size-grip {
    width: 10px;
    height: 10px;
    place-self: center;
}

/* Minimized project manager */
.desktop {
    height: 27px;
    padding-top: 3px;
}

.minimized {
    display: flex;
    align-items: center;
    width: 121px;
    height: 24px;
    padding: 0 3px 0 2px;
    background-color: #c3d3e8;
    border: 1px solid #4c545f;
    border-left: none;
    border-bottom: none;
    border-radius: 0 4px 0 0;
}

.minimized .title-icon {
    margin-right: 0;
}
```
